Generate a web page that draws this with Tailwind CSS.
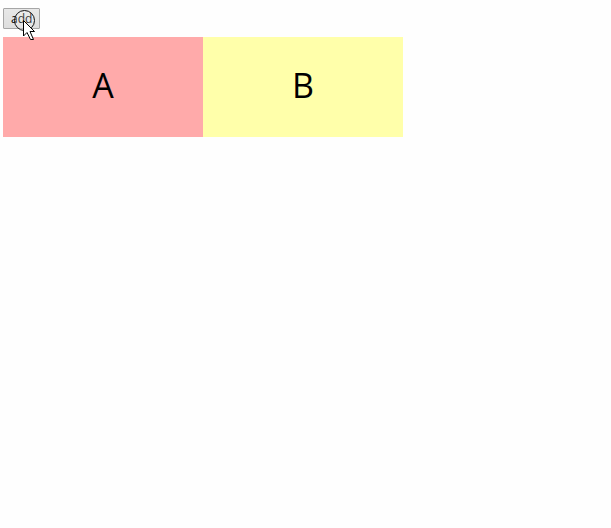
<!DOCTYPE html>
<html lang="en">

<head>
  <meta charset="UTF-8">
  <meta name="viewport" content="width=device-width, initial-scale=1.0">
  <title>Flex Items</title>
  <script src="https://cdn.jsdelivr.net/npm/@tailwindcss/browser@4"></script>
</head>

<body class="min-h-screen bg-[#fefefe] font-['Open_Sans',sans-serif] text-black">
  <main class="px-[3px] pt-2">
    <div class="relative mb-2 flex">
      <button type="button" id="add"
        class="h-[21px] rounded-[1px] border border-[#a6a6a6] bg-linear-to-b from-[#e8e8e8] to-[#dedede] px-[7px] text-[12px] leading-[19px]">add</button>
      <!-- click ring and mouse pointer -->
      <svg class="pointer-events-none absolute top-0 left-2 h-9 w-7" viewBox="0 0 28 36" fill="none" aria-hidden="true">
        <circle cx="13.5" cy="12.5" r="10" fill="#fff" fill-opacity=".2" stroke="#111" />
        <path d="M12.5 12.5V28L16 24.5L19.5 31.5H22.5L19 23.5H23.5Z" fill="#fff" stroke="#000" />
      </svg>
    </div>
    <div id="list" class="flex flex-wrap text-[34px]">
      <div class="flex h-[100px] w-[200px] items-center justify-center bg-[#ffaaaa] pb-1">A</div>
      <div class="flex h-[100px] w-[200px] items-center justify-center bg-[#ffffaa] pb-1">B</div>
    </div>
  </main>
</body>

</html>
